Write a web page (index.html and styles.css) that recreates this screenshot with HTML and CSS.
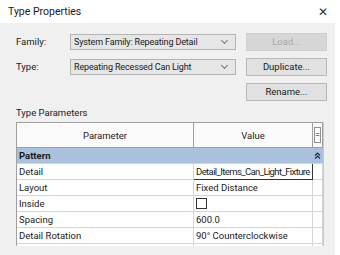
FILE: index.html
```html
<!DOCTYPE html>
<html lang="en">
<head>
    <meta charset="UTF-8">
    <title>Type Properties</title>
    <link rel="stylesheet" href="styles.css">
</head>
<body>
    <div class="titlebar">
        <span class="title">Type Properties</span>
        <span class="close">&#x2715;</span>
    </div>
    <div class="panel">
        <div class="row">
            <span class="label">Family:</span>
            <div class="select">System Family: Repeating Detail<span class="arrow"></span></div>
            <div class="btn disabled">Load...</div>
        </div>
        <div class="row">
            <span class="label">Type:</span>
            <div class="select">Repeating Recessed Can Light<span class="arrow"></span></div>
            <div class="btn">Duplicate...</div>
        </div>
        <div class="row">
            <span class="label"></span>
            <div class="spacer"></div>
            <div class="btn">Rename...</div>
        </div>
        <div class="section">Type Parameters</div>
        <div class="grid">
            <table>
                <thead>
                    <tr>
                        <th class="pcol">Parameter</th>
                        <th class="vcol">Value</th>
                        <th class="scol"><span class="eq">=</span></th>
                    </tr>
                </thead>
                <tbody>
                    <tr class="group">
                        <td colspan="2">Pattern</td>
                        <td class="scol chev">
                            <svg width="7" height="7" viewBox="0 0 7 7">
                                <path d="M1 3.5 L3.5 1 L6 3.5 M1 6.5 L3.5 4 L6 6.5" fill="none" stroke="#1e2a40" stroke-width="1.2"/>
                            </svg>
                        </td>
                    </tr>
                    <tr>
                        <td>Detail</td>
                        <td class="edit">Detail_Items_Can_Light_Fixture</td>
                        <td></td>
                    </tr>
                    <tr>
                        <td>Layout</td>
                        <td>Fixed Distance</td>
                        <td></td>
                    </tr>
                    <tr>
                        <td>Inside</td>
                        <td><span class="check"></span></td>
                        <td></td>
                    </tr>
                    <tr>
                        <td>Spacing</td>
                        <td>600.0</td>
                        <td></td>
                    </tr>
                    <tr>
                        <td>Detail Rotation</td>
                        <td>90° Counterclockwise</td>
                        <td></td>
                    </tr>
                    <tr>
                        <td>&nbsp;</td>
                        <td></td>
                        <td></td>
                    </tr>
                </tbody>
            </table>
        </div>
    </div>
</body>
</html>
```

FILE: styles.css
```css
body {
    margin: 0;
    background-color: #ffffff;
    font-family: 'Roboto', 'Liberation Sans', sans-serif;
    font-size: 9.5px;
    color: #1a1a1a;
    width: 340px;
    height: 255px;
    overflow: hidden;
}
.titlebar {
    height: 23px;
    display: flex;
    align-items: center;
    justify-content: space-between;
    padding: 0 12px 0 8px;
}
.title {
    font-size: 10.5px;
}
.close {
    font-size: 12px;
    color: #333;
}
.panel {
    background-color: #f0f0f0;
    width: 335px;
    height: 232px;
    padding-top: 9px;
    box-sizing: border-box;
}
.row {
    display: flex;
    align-items: center;
    height: 19px;
    margin-bottom: 6px;
}
.label {
    width: 54px;
    padding-left: 16px;
}
.select, .spacer {
    width: 166px;
    height: 16px;
    box-sizing: border-box;
}
.select {
    background-color: #e6e6e6;
    border: 1px solid #b4b4b4;
    padding-left: 3px;
    line-height: 14px;
    font-size: 9px;
    letter-spacing: -0.15px;
    position: relative;
}
.arrow {
    position: absolute;
    right: 8px;
    top: 3px;
    width: 4px;
    height: 4px;
    border-right: 1px solid #777;
    border-bottom: 1px solid #777;
    transform: rotate(45deg);
}
.btn {
    margin-left: 10px;
    width: 81px;
    height: 18px;
    box-sizing: border-box;
    background-color: #e1e1e1;
    border: 1px solid #b8b8b8;
    text-align: center;
    line-height: 16px;
}
.btn.disabled {
    background-color: #d6d6d6;
    border-color: #d0d0d0;
    color: #a8a8a8;
}
.section {
    padding-left: 16px;
    margin-top: 1px;
    height: 15px;
    line-height: 12px;
}
.grid {
    margin-left: 16px;
    width: 308px;
    height: 124px;
    overflow: hidden;
    border-left: 1px solid #a0a0a0;
    border-right: 1px solid #c8c8c8;
    box-sizing: border-box;
}
table {
    width: 100%;
    border-collapse: collapse;
    table-layout: fixed;
}
th {
    font-weight: normal;
    height: 22px;
    background-color: #fbfbfb;
    border: 1px solid #a0a0a0;
    border-left: none;
    text-align: center;
}
.pcol { width: 174px; }
.scol { width: 9px; padding: 0; }
.eq {
    display: block;
    border: 1px solid #909090;
    margin: 0 1px;
    height: 14px;
    line-height: 14px;
    font-size: 9px;
}
td {
    height: 15px;
    padding: 0 0 0 2px;
    border-bottom: 1px solid #d4d4d4;
    border-right: 1px solid #d4d4d4;
    background-color: #ffffff;
    white-space: nowrap;
    overflow: hidden;
}
.group td {
    background-color: #a9c1dc;
    font-weight: bold;
    border-right: none;
    height: 15px;
}
.chev {
    text-align: center;
    padding: 0;
    line-height: 0;
}
.edit {
    border: 1px solid #333;
    letter-spacing: -0.6px;
}
.check {
    display: inline-block;
    width: 9px;
    height: 9px;
    border: 1px solid #333;
    vertical-align: middle;
}
```
